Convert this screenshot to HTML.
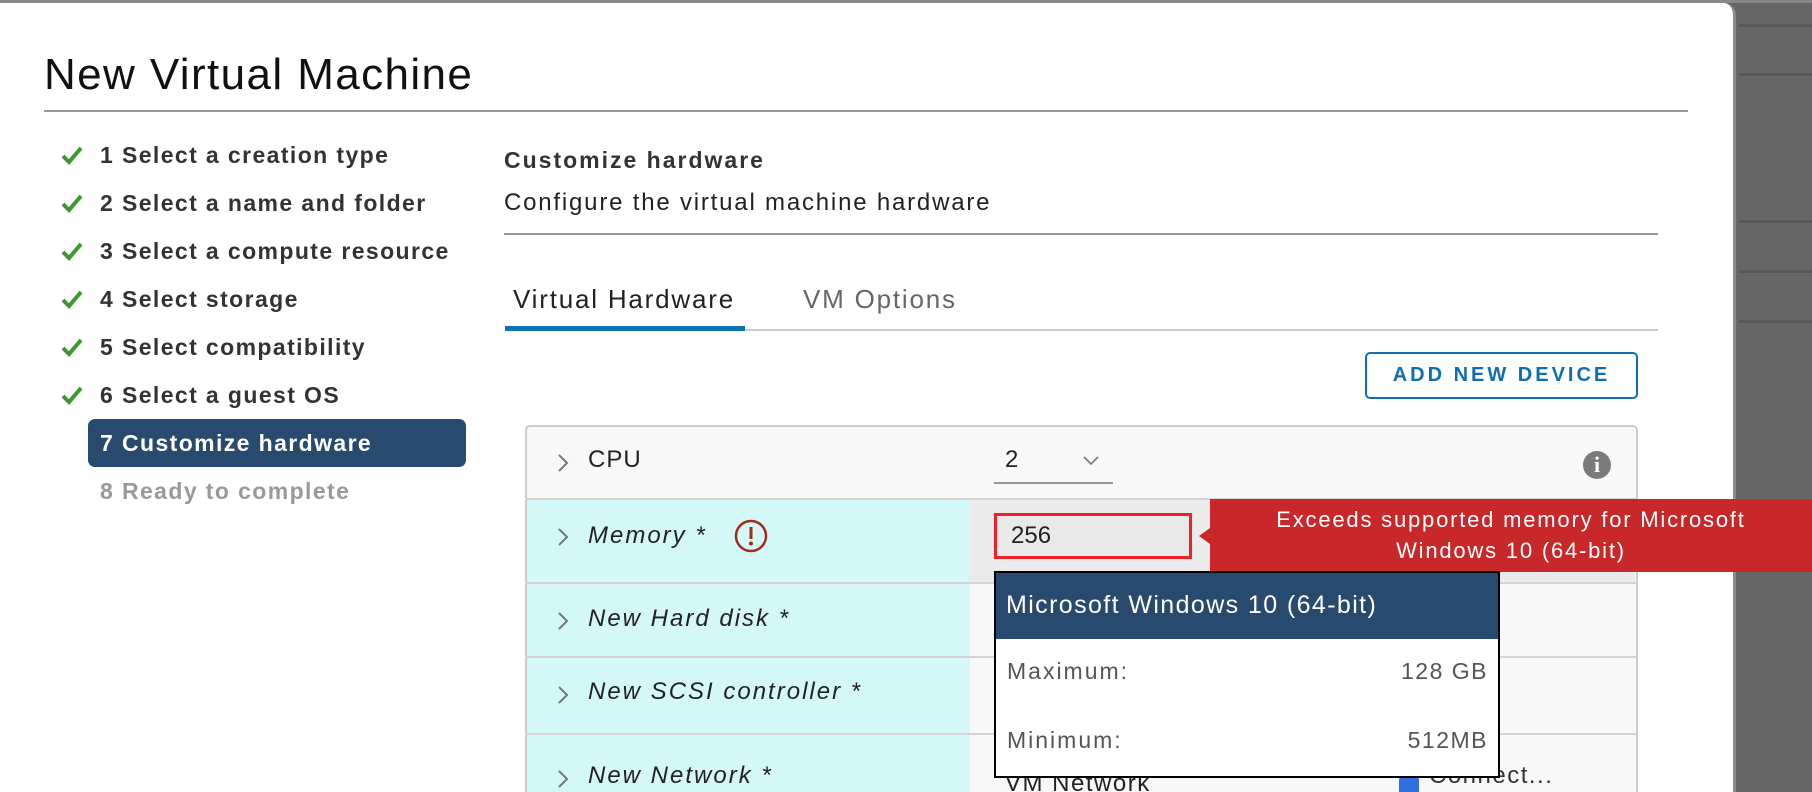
<!DOCTYPE html>
<html style="overflow:hidden;height:792px"><head><meta charset="utf-8"><style>
*{margin:0;padding:0;box-sizing:border-box}
body{width:1812px;height:792px;overflow:hidden;background:#666;font-family:"Liberation Sans",sans-serif;position:relative}
.a{position:absolute;white-space:nowrap}
.modal{position:absolute;left:0;top:3px;width:1736px;height:789px;background:#fff;border-top-right-radius:12px;border-right:3px solid #8a8a8a}
.dl{position:absolute;left:1739px;width:73px;height:3px;background:#585858}
.step{position:absolute;left:100px;font-size:23px;letter-spacing:1.4px;font-weight:bold;color:#333;line-height:30px}
.chk{position:absolute;left:60px;width:24px;height:24px}
.row{position:absolute;left:525px;width:1112px;border-top:2px solid #d4d4d4}
.lbl{position:absolute;left:588px;font-size:24px;letter-spacing:2px;font-style:italic;color:#222}
.chev{position:absolute;left:555px;width:16px;height:22px}
</style></head><body>
<div class="a" style="left:0;top:0;width:1812px;height:3px;background:#888"></div>
<div class="dl" style="top:24px"></div><div class="dl" style="top:73px"></div><div class="dl" style="top:220px"></div><div class="dl" style="top:270px"></div><div class="dl" style="top:320px"></div>
<div class="modal"></div>
<div class="a" style="left:44px;top:50px;font-size:44px;letter-spacing:1.4px;color:#111">New Virtual Machine</div>
<div class="a" style="left:44px;top:110px;width:1644px;height:2px;background:#999"></div>

<svg class="chk" style="top:143px" viewBox="0 0 24 24"><path d="M3 13l6 6L21 5" fill="none" stroke="#3c9a2c" stroke-width="4"/></svg>
<svg class="chk" style="top:191px" viewBox="0 0 24 24"><path d="M3 13l6 6L21 5" fill="none" stroke="#3c9a2c" stroke-width="4"/></svg>
<svg class="chk" style="top:239px" viewBox="0 0 24 24"><path d="M3 13l6 6L21 5" fill="none" stroke="#3c9a2c" stroke-width="4"/></svg>
<svg class="chk" style="top:287px" viewBox="0 0 24 24"><path d="M3 13l6 6L21 5" fill="none" stroke="#3c9a2c" stroke-width="4"/></svg>
<svg class="chk" style="top:335px" viewBox="0 0 24 24"><path d="M3 13l6 6L21 5" fill="none" stroke="#3c9a2c" stroke-width="4"/></svg>
<svg class="chk" style="top:383px" viewBox="0 0 24 24"><path d="M3 13l6 6L21 5" fill="none" stroke="#3c9a2c" stroke-width="4"/></svg>
<div class="step" style="top:140px">1 Select a creation type</div>
<div class="step" style="top:188px">2 Select a name and folder</div>
<div class="step" style="top:236px">3 Select a compute resource</div>
<div class="step" style="top:284px">4 Select storage</div>
<div class="step" style="top:332px">5 Select compatibility</div>
<div class="step" style="top:380px">6 Select a guest OS</div>
<div class="a" style="left:88px;top:419px;width:378px;height:48px;background:#284a6e;border-radius:7px"></div>
<div class="step" style="top:428px;color:#fff">7 Customize hardware</div>
<div class="step" style="top:476px;color:#999">8 Ready to complete</div>

<div class="a" style="left:504px;top:147px;font-size:23px;letter-spacing:2px;font-weight:bold;color:#333">Customize hardware</div>
<div class="a" style="left:504px;top:189px;font-size:24px;letter-spacing:1.8px;color:#222">Configure the virtual machine hardware</div>
<div class="a" style="left:504px;top:233px;width:1154px;height:2px;background:#999"></div>
<div class="a" style="left:513px;top:284px;font-size:26px;letter-spacing:1.8px;color:#222">Virtual Hardware</div>
<div class="a" style="left:803px;top:284px;font-size:26px;letter-spacing:1.8px;color:#666">VM Options</div>
<div class="a" style="left:505px;top:329px;width:1153px;height:2px;background:#ccc"></div>
<div class="a" style="left:505px;top:326px;width:240px;height:5px;background:#1170b0"></div>

<div class="a" style="left:1365px;top:352px;width:273px;height:47px;border:2px solid #0f6fae;border-radius:5px;color:#0f6fae;font-size:20px;font-weight:bold;letter-spacing:3px;text-align:center;line-height:43px">ADD NEW DEVICE</div>

<div class="a" style="left:525px;top:425px;width:1113px;height:380px;background:#f8f8f8;border:2px solid #ccc;border-radius:5px"></div>
<div class="a" style="left:527px;top:499px;width:443px;height:293px;background:#d4f7f8"></div>
<div class="a" style="left:970px;top:499px;width:665px;height:84px;background:#ebebeb"></div>
<div class="row" style="top:498px"></div><div class="row" style="top:582px"></div><div class="row" style="top:656px"></div><div class="row" style="top:733px"></div>

<svg class="chev" style="top:452px" viewBox="0 0 16 22"><path d="M4 3l8 8-8 8" fill="none" stroke="#777" stroke-width="2"/></svg>
<svg class="chev" style="top:526px" viewBox="0 0 16 22"><path d="M4 3l8 8-8 8" fill="none" stroke="#777" stroke-width="2"/></svg>
<svg class="chev" style="top:610px" viewBox="0 0 16 22"><path d="M4 3l8 8-8 8" fill="none" stroke="#777" stroke-width="2"/></svg>
<svg class="chev" style="top:684px" viewBox="0 0 16 22"><path d="M4 3l8 8-8 8" fill="none" stroke="#777" stroke-width="2"/></svg>
<svg class="chev" style="top:768px" viewBox="0 0 16 22"><path d="M4 3l8 8-8 8" fill="none" stroke="#777" stroke-width="2"/></svg>
<div class="a" style="left:588px;top:446px;font-size:24px;letter-spacing:1px;color:#222">CPU</div>
<div class="lbl" style="top:522px">Memory *</div>
<svg class="a" style="left:734px;top:519px" width="34" height="34" viewBox="0 0 34 34"><circle cx="17" cy="17" r="15" fill="none" stroke="#a42a1a" stroke-width="2.5"/><rect x="15.5" y="8" width="3" height="12" fill="#a42a1a"/><circle cx="17" cy="24.5" r="2" fill="#a42a1a"/></svg>
<div class="lbl" style="top:605px">New Hard disk *</div>
<div class="lbl" style="top:678px">New SCSI controller *</div>
<div class="lbl" style="top:762px">New Network *</div>

<div class="a" style="left:1005px;top:446px;font-size:24px;color:#222">2</div>
<svg class="a" style="left:1082px;top:455px" width="18" height="12" viewBox="0 0 18 12"><path d="M2 2l7 7 7-7" fill="none" stroke="#777" stroke-width="1.6"/></svg>
<div class="a" style="left:994px;top:482px;width:119px;height:2px;background:#999"></div>
<div class="a" style="left:1583px;top:451px;width:28px;height:28px;border-radius:50%;background:#7a7a7a;color:#fff;font-weight:bold;font-size:22px;text-align:center;line-height:28px;font-family:'Liberation Serif',serif">i</div>

<div class="a" style="left:994px;top:513px;width:198px;height:46px;background:#e9e9e9;border:3px solid #f0202a;font-size:24px;color:#222;padding-left:14px;line-height:40px">256</div>

<div class="a" style="left:1210px;top:499px;width:602px;height:73px;background:#c8282a;color:#fff;font-size:22px;letter-spacing:1.8px;text-align:center;line-height:31px;padding-top:5px">Exceeds supported memory for Microsoft<br>Windows 10 (64-bit)</div>
<div class="a" style="left:1199px;top:528px;width:0;height:0;border-top:8px solid transparent;border-bottom:8px solid transparent;border-right:11px solid #c8282a"></div>

<div class="a" style="left:1005px;top:770px;font-size:24px;letter-spacing:1.5px;color:#222">VM Network</div>
<div class="a" style="left:1399px;top:776px;width:20px;height:20px;background:#2f6fe0;border-radius:4px"></div>
<div class="a" style="left:1429px;top:762px;font-size:24px;letter-spacing:1.5px;color:#333">Connect...</div>

<div class="a" style="left:994px;top:571px;width:506px;height:207px;background:#fff;border:2px solid #000"></div>
<div class="a" style="left:996px;top:573px;width:502px;height:66px;background:#284a6e;color:#fff;font-size:25px;letter-spacing:1.4px;padding-left:10px;line-height:64px">Microsoft Windows 10 (64-bit)</div>
<div class="a" style="left:1007px;top:658px;font-size:23px;letter-spacing:2px;color:#555">Maximum:</div>
<div class="a" style="left:1370px;top:658px;font-size:23px;letter-spacing:1.5px;color:#555;width:118px;text-align:right">128 GB</div>
<div class="a" style="left:1007px;top:727px;font-size:23px;letter-spacing:2px;color:#555">Minimum:</div>
<div class="a" style="left:1370px;top:727px;font-size:23px;letter-spacing:1.5px;color:#555;width:118px;text-align:right">512MB</div>
</body></html>
